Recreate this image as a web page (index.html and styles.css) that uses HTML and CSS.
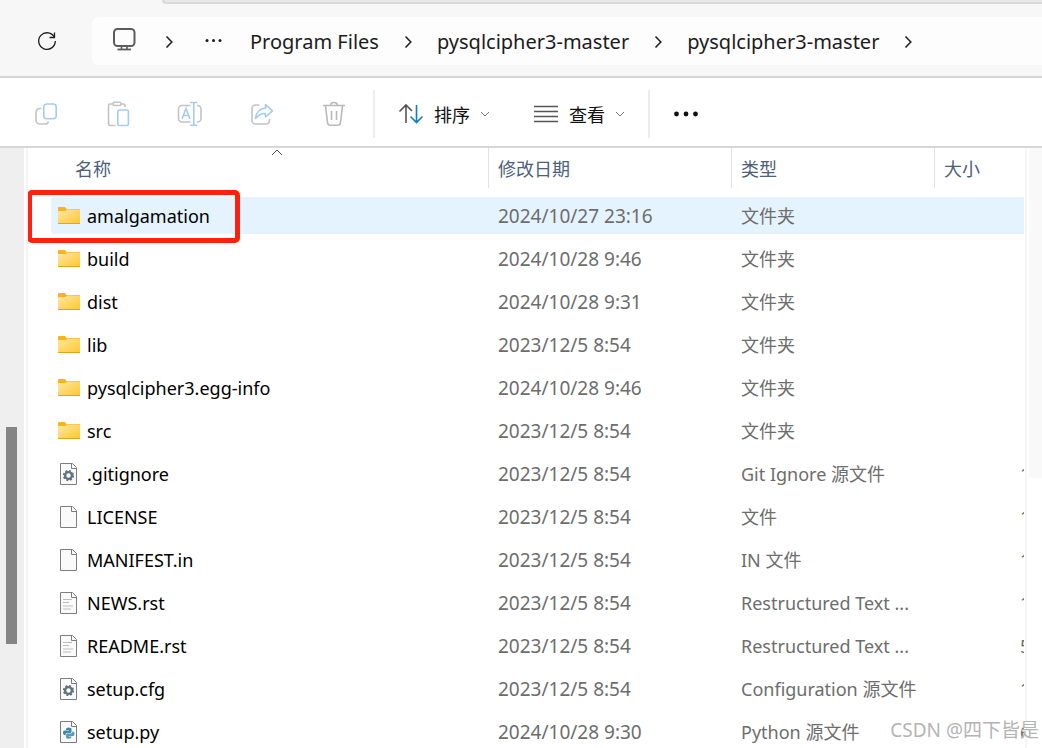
FILE: index.html
```html
<!DOCTYPE html>
<html lang="zh-CN">
<head>
  <meta charset="UTF-8">
  <title>pysqlcipher3-master</title>
  <link rel="stylesheet" href="styles.css">
</head>
<body>

  <!-- shared icons -->
  <svg class="sprite" aria-hidden="true">
    <defs>
      <linearGradient id="folderFill" x1="0" y1="0" x2="1" y2="1">
        <stop offset="0" stop-color="#ffe8a3"/>
        <stop offset="1" stop-color="#ffc72f"/>
      </linearGradient>
      <symbol id="chevron" viewBox="0 0 8 14">
        <path d="M1.5 1.5 L6.8 7 L1.5 12.5" fill="none" stroke="#222" stroke-width="1.6"/>
      </symbol>
      <symbol id="down" viewBox="0 0 10 6">
        <path d="M1 1 L5 5 L9 1" fill="none" stroke="#777" stroke-width="1"/>
      </symbol>
      <symbol id="folder" viewBox="0 0 22 22">
        <path d="M0 4 V3 a1 1 0 0 1 1-1 H7 L8.5 4 H22 V10 H0 Z" fill="#f9b41c"/>
        <path d="M0 6 H7.5 L9 4.5 H22 V18.5 H0 Z" fill="url(#folderFill)"/>
        <path d="M0 18.5 H22" stroke="#e9a21b"/>
      </symbol>
      <symbol id="page" viewBox="0 0 22 22">
        <path d="M2.5 .5 H14.5 L18.5 4.5 V21.5 H2.5 Z" fill="#fafafa" stroke="#7d7d7d"/>
        <path d="M13.5 .5 V5.5 H18.5" fill="none" stroke="#7d7d7d"/>
      </symbol>
      <symbol id="gear" viewBox="0 0 22 22">
        <use href="#page"/>
        <circle cx="10.5" cy="12.5" r="3.4" fill="none" stroke="#5f7280" stroke-width="2.4"/>
        <circle cx="10.5" cy="12.5" r="4.8" fill="none" stroke="#5f7280" stroke-width="1.6" stroke-dasharray="2 1.77"/>
      </symbol>
      <symbol id="text" viewBox="0 0 22 22">
        <use href="#page"/>
        <path d="M5 7.5 H14 M5 10.5 H11 M5 14 H15 M5 17 H13" stroke="#bdbdbd" stroke-width="1.2"/>
      </symbol>
      <symbol id="python" viewBox="0 0 22 22">
        <use href="#page"/>
        <path d="M8 9 V8 q0-1.5 2.5-1.5 q3 0 3 1.5 V10.5 q0 1.5-1.5 1.5 H9 q-1.5 0-1.5 2 H6.5 q-1.5 0-1.5-2.5 q0-2 1.5-2 H11 V9 Z" fill="#3f86a8"/>
        <path d="M13.5 15.5 V16 q0 1.8-2.7 1.8 q-2.8 0-2.8-1.5 V14 q0-1.5 1.5-1.5 H12.5 q2 0 2-2 H15 q1.5 0 1.5 2.3 q0 2.2-1.5 2.2 H10.8 V15.5 Z" fill="#559bb9"/>
      </symbol>
    </defs>
  </svg>

  <div class="tabs"></div>

  <header class="address">
    <button class="refresh" aria-label="刷新">
      <svg width="22" height="22" viewBox="0 0 22 22" fill="none" stroke="#1c1c1c" stroke-width="1.3">
        <path d="M18.5 7.5 A8.3 8.3 0 1 0 19.3 11"/>
        <path d="M18.5 2.5 V7.5 H13.5"/>
      </svg>
    </button>
    <nav class="crumbs">
      <svg class="pc" width="24" height="24" viewBox="0 0 24 24" fill="none" stroke="#5c5c5c">
        <rect x="2" y="1" width="20.5" height="17" rx="3.5" stroke-width="2"/>
        <path d="M9.5 18 V21 M15 18 V21" stroke-width="1.6"/>
        <path d="M5.5 21.5 H19" stroke-width="1.8"/>
      </svg>
      <svg class="chevron"><use href="#chevron"/></svg>
      <svg width="27" height="6" viewBox="0 0 27 6" fill="#1c1c1c">
        <circle cx="9" cy="1.6" r="1.5"/><circle cx="15.5" cy="1.6" r="1.5"/><circle cx="22" cy="1.6" r="1.5"/>
      </svg>
      <a href="#">Program Files</a>
      <svg class="chevron"><use href="#chevron"/></svg>
      <a href="#">pysqlcipher3-master</a>
      <svg class="chevron"><use href="#chevron"/></svg>
      <a href="#">pysqlcipher3-master</a>
      <svg class="chevron"><use href="#chevron"/></svg>
    </nav>
  </header>

  <div class="toolbar">
    <button class="tool" aria-label="复制">
      <svg width="24" height="24" viewBox="0 0 24 24" fill="none" stroke-width="1.6">
        <path d="M7.5 6.5 H6 a4 4 0 0 0-4 4 V18 a4 4 0 0 0 4 4 H11 a3.5 3.5 0 0 0 3.5-2.5" stroke="#c4c4c4"/>
        <rect x="9.8" y="2" width="12.4" height="14.8" rx="3" stroke="#a3cdee"/>
      </svg>
    </button>
    <button class="tool" aria-label="粘贴">
      <svg width="24" height="26" viewBox="0 0 24 26" fill="none" stroke-width="1.6">
        <path d="M7 3 H4 a1.5 1.5 0 0 0-1.5 1.5 V23 a1.5 1.5 0 0 0 1.5 1.5 H9.5 M15 3 H17.500 a1.5 1.5 0 0 1 1.5 1.5 V6" stroke="#c4c4c4"/>
        <rect x="7" y="1.3" width="8" height="3.2" rx="1.6" stroke="#c4c4c4"/>
        <rect x="11.8" y="9" width="10.6" height="15.5" rx="1.5" stroke="#a3cdee"/>
      </svg>
    </button>
    <button class="tool" aria-label="重命名">
      <svg width="26" height="26" viewBox="0 0 26 26" fill="none" stroke-width="1.6">
        <path d="M13.5 4.5 H5 a3.5 3.5 0 0 0-3.5 3.5 V17.5 a3.5 3.5 0 0 0 3.5 3.5 H13.5 M20 4.5 h.5 a3.5 3.5 0 0 1 3.5 3.5 V17.5 a3.5 3.5 0 0 1-3.5 3.5 H20" stroke="#c4c4c4"/>
        <path d="M5 18 L9 7.5 L13 18 M6.5 14.5 H11.5 M16.8 1.8 V24 M13 1.5 H20.5 M13 24.2 H20.5" stroke="#a3cdee"/>
      </svg>
    </button>
    <button class="tool" aria-label="共享">
      <svg width="24" height="24" viewBox="0 0 24 24" fill="none" stroke-width="1.6">
        <path d="M9.5 3 H5.5 a3.5 3.5 0 0 0-3.5 3.5 V18.5 a3.5 3.5 0 0 0 3.5 3.5 H16 a3.5 3.5 0 0 0 3.5-3.5 V17" stroke="#c4c4c4"/>
        <path d="M15.5 2.5 L22.5 8.8 L15.5 15 V11.5 Q9.5 11.5 5.5 16.5 Q6.5 6.8 15.5 6 Z" stroke="#a3cdee" stroke-linejoin="round"/>
      </svg>
    </button>
    <button class="tool" aria-label="删除">
      <svg width="24" height="26" viewBox="0 0 24 26" fill="none" stroke="#b9b9b9" stroke-width="1.6">
        <path d="M1 4.5 H23 M8.5 4.5 a3.5 3 0 0 1 7 0 M3.5 5 L5.5 21.5 a3 3 0 0 0 3 2.8 H15.5 a3 3 0 0 0 3-2.8 L20.5 5 M9.5 10 V19 M14.5 10 V19"/>
      </svg>
    </button>
    <span class="divider"></span>
    <button class="menu">
      <svg width="26" height="22" viewBox="0 0 26 22" fill="none" stroke-width="1.6">
        <path d="M8 20 V2 M1.5 8.5 L8 2 L14 8" stroke="#555"/>
        <path d="M18.5 2 V19.5 M12.5 13.5 L18.5 19.5 L24.5 13.5" stroke="#1079d0"/>
      </svg>
      <span>排序</span>
      <svg class="down"><use href="#down"/></svg>
    </button>
    <button class="menu">
      <svg width="26" height="22" viewBox="0 0 26 22" stroke="#555" stroke-width="1.4">
        <path d="M1 3.5 H25 M1 8.5 H25 M1 13.5 H25 M1 18.5 H25"/>
      </svg>
      <span>查看</span>
      <svg class="down"><use href="#down"/></svg>
    </button>
    <span class="divider"></span>
    <button class="more" aria-label="更多">
      <svg width="26" height="6" viewBox="0 0 26 6" fill="#111">
        <circle cx="3.5" cy="3" r="2.4"/><circle cx="13" cy="3" r="2.4"/><circle cx="22.5" cy="3" r="2.4"/>
      </svg>
    </button>
  </div>

  <main class="content">
    <div class="sidebar"><div class="thumb"></div></div>

    <div class="files">
      <table>
        <colgroup>
          <col class="col-name"><col class="col-date"><col class="col-type"><col>
        </colgroup>
        <thead>
          <tr>
            <th class="first"><div>名称
              <svg class="sort" width="12" height="7" viewBox="0 0 12 7"><path d="M1 6 L6 1 L11 6" fill="none" stroke="#555"/></svg>
            </div></th>
            <th><div>修改日期</div></th>
            <th><div>类型</div></th>
            <th><div>大小</div></th>
          </tr>
        </thead>
        <tbody>
          <tr class="selected"><td><div class="name"><svg><use href="#folder"/></svg>amalgamation<i class="mark"></i></div></td><td class="date">2024/10/27 23:16</td><td>文件夹</td><td></td></tr>
          <tr><td><div class="name"><svg><use href="#folder"/></svg>build</div></td><td class="date">2024/10/28 9:46</td><td>文件夹</td><td></td></tr>
          <tr><td><div class="name"><svg><use href="#folder"/></svg>dist</div></td><td class="date">2024/10/28 9:31</td><td>文件夹</td><td></td></tr>
          <tr><td><div class="name"><svg><use href="#folder"/></svg>lib</div></td><td class="date">2023/12/5 8:54</td><td>文件夹</td><td></td></tr>
          <tr><td><div class="name"><svg><use href="#folder"/></svg>pysqlcipher3.egg-info</div></td><td class="date">2024/10/28 9:46</td><td>文件夹</td><td></td></tr>
          <tr><td><div class="name"><svg><use href="#folder"/></svg>src</div></td><td class="date">2023/12/5 8:54</td><td>文件夹</td><td></td></tr>
          <tr><td><div class="name"><svg><use href="#gear"/></svg>.gitignore</div></td><td class="date">2023/12/5 8:54</td><td>Git Ignore 源文件</td><td class="size">1 KB</td></tr>
          <tr><td><div class="name"><svg><use href="#page"/></svg>LICENSE</div></td><td class="date">2023/12/5 8:54</td><td>文件</td><td class="size">1 KB</td></tr>
          <tr><td><div class="name"><svg><use href="#page"/></svg>MANIFEST.in</div></td><td class="date">2023/12/5 8:54</td><td>IN 文件</td><td class="size">1 KB</td></tr>
          <tr><td><div class="name"><svg><use href="#text"/></svg>NEWS.rst</div></td><td class="date">2023/12/5 8:54</td><td>Restructured Text ...</td><td class="size">1 KB</td></tr>
          <tr><td><div class="name"><svg><use href="#text"/></svg>README.rst</div></td><td class="date">2023/12/5 8:54</td><td>Restructured Text ...</td><td class="size">5 KB</td></tr>
          <tr><td><div class="name"><svg><use href="#gear"/></svg>setup.cfg</div></td><td class="date">2023/12/5 8:54</td><td>Configuration 源文件</td><td class="size">1 KB</td></tr>
          <tr><td><div class="name"><svg><use href="#python"/></svg>setup.py</div></td><td class="date">2024/10/28 9:30</td><td>Python 源文件</td><td class="size">6 KB</td></tr>
        </tbody>
      </table>
    </div>

    <div class="gutter"><div class="panel"></div></div>
  </main>

  <div class="watermark">CSDN @四下皆是</div>

</body>
</html>
```
FILE: styles.css
```css
* {
  box-sizing: border-box;
}

body {
  position: relative;
  display: flex;
  flex-direction: column;
  height: 100vh;
  margin: 0;
  overflow: hidden;
  background: #fff;
  color: #111;
  font-family: "Noto Sans", "Noto Sans CJK SC", sans-serif;
  font-size: 18px;
}

svg {
  display: block;
  flex: none;
}

button {
  display: flex;
  align-items: center;
  justify-content: center;
  padding: 0;
  border: none;
  background: none;
  color: inherit;
  font: inherit;
}

.sprite {
  position: absolute;
  width: 0;
  height: 0;
}

/* address bar */
.tabs {
  flex: none;
  height: 4px;
  margin-left: 162px;
  background: #e8e8e8;
  border-bottom: 2px solid #d9d9d9;
  border-left: 2px solid #d9d9d9;
  border-bottom-left-radius: 4px;
  box-shadow: 0 0 0 200px #f7f7f7;
  clip-path: inset(0 0 0 -162px);
}

.address {
  display: flex;
  flex: none;
  align-items: center;
  height: 74px;
  padding-top: 2px;
  background: #f7f7f7;
  border-bottom: 2px solid #d6d6d6;
}

.refresh {
  width: 92px;
  height: 48px;
  padding-left: 2px;
}

.crumbs {
  display: flex;
  flex: 1;
  align-items: center;
  gap: 25px;
  height: 48px;
  padding: 2px 0 0 20px;
  background: #fdfdfd;
  border-radius: 6px 0 0 6px;
}

.crumbs a {
  color: #1c1c1c;
  font-size: 20px;
  line-height: 28px;
  text-decoration: none;
  white-space: nowrap;
}

.pc {
  margin: 0 4px 4px 0;
}

.chevron {
  width: 8px;
  height: 14px;
}

/* toolbar */
.toolbar {
  display: flex;
  flex: none;
  align-items: center;
  height: 70px;
  padding: 4px 0 0 10px;
  border-bottom: 2px solid #d6d6d6;
}

.tool {
  width: 72px;
  height: 48px;
}

.divider {
  width: 2px;
  height: 48px;
  margin-left: 3px;
  background: #ededed;
}

.menu {
  gap: 10px;
  height: 48px;
  padding: 0 20px 0 23px;
}

.down {
  width: 10px;
  height: 6px;
}

.more {
  width: 72px;
  height: 48px;
}

/* file list */
.content {
  display: flex;
  flex: 1;
  min-height: 0;
}

.sidebar {
  width: 24px;
  padding: 279px 0 0 6px;
  background: #efefef;
}

.thumb {
  width: 11px;
  height: 217px;
  background: #858585;
}

.files {
  flex: 1;
  min-width: 0;
  margin-left: 2px;
  padding-left: 23px;
  overflow: hidden;
  border-left: 2px solid #f5f5f5;
}

table {
  width: 100%;
  table-layout: fixed;
  border-collapse: separate;
  border-spacing: 0;
}

.col-name {
  width: 437px;
}

.col-date {
  width: 243px;
}

.col-type {
  width: 203px;
}

th {
  height: 46px;
  padding: 0;
  color: #4c607a;
  font-weight: normal;
  text-align: left;
  vertical-align: top;
}

th div {
  height: 40px;
  padding-left: 9px;
  line-height: 42px;
  border-left: 1px solid #e2e2e2;
}

.first div {
  position: relative;
  padding-left: 24px;
  border-left: none;
}

.sort {
  position: absolute;
  top: 1px;
  left: 220px;
}

td {
  height: 43px;
  padding: 0 0 0 10px;
  overflow: hidden;
  border: solid transparent;
  border-width: 3px 0;
  background-clip: padding-box;
  color: #6d6d6d;
  line-height: 36px;
  white-space: nowrap;
}

td:first-child {
  padding-left: 7px;
  overflow: visible;
  color: #000;
}

.date {
  font-size: 19px;
}

.size {
  padding-left: 86px;
}

.selected td {
  background-color: #e5f3ff;
}

.selected td:first-child {
  border-radius: 5px 0 0 5px;
}

.name {
  position: relative;
  display: flex;
  align-items: center;
  gap: 7px;
}

.name svg {
  width: 22px;
  height: 22px;
}

/* red frame round the selected folder */
.mark {
  position: absolute;
  top: -8px;
  left: -31px;
  width: 213px;
  height: 53px;
  border: 5px solid #ff2012;
  border-radius: 5px;
}

.gutter {
  width: 17px;
  margin-left: 1px;
  padding-left: 2px;
  border-left: 2px solid #f5f5f5;
}

.panel {
  height: 330px;
  background: #f9f9f9;
}

.watermark {
  position: absolute;
  right: 3px;
  bottom: 4px;
  color: #b4b4b4;
  font-size: 19px;
  line-height: 28px;
  text-shadow: 1px 1px 1px #fff;
}
```
